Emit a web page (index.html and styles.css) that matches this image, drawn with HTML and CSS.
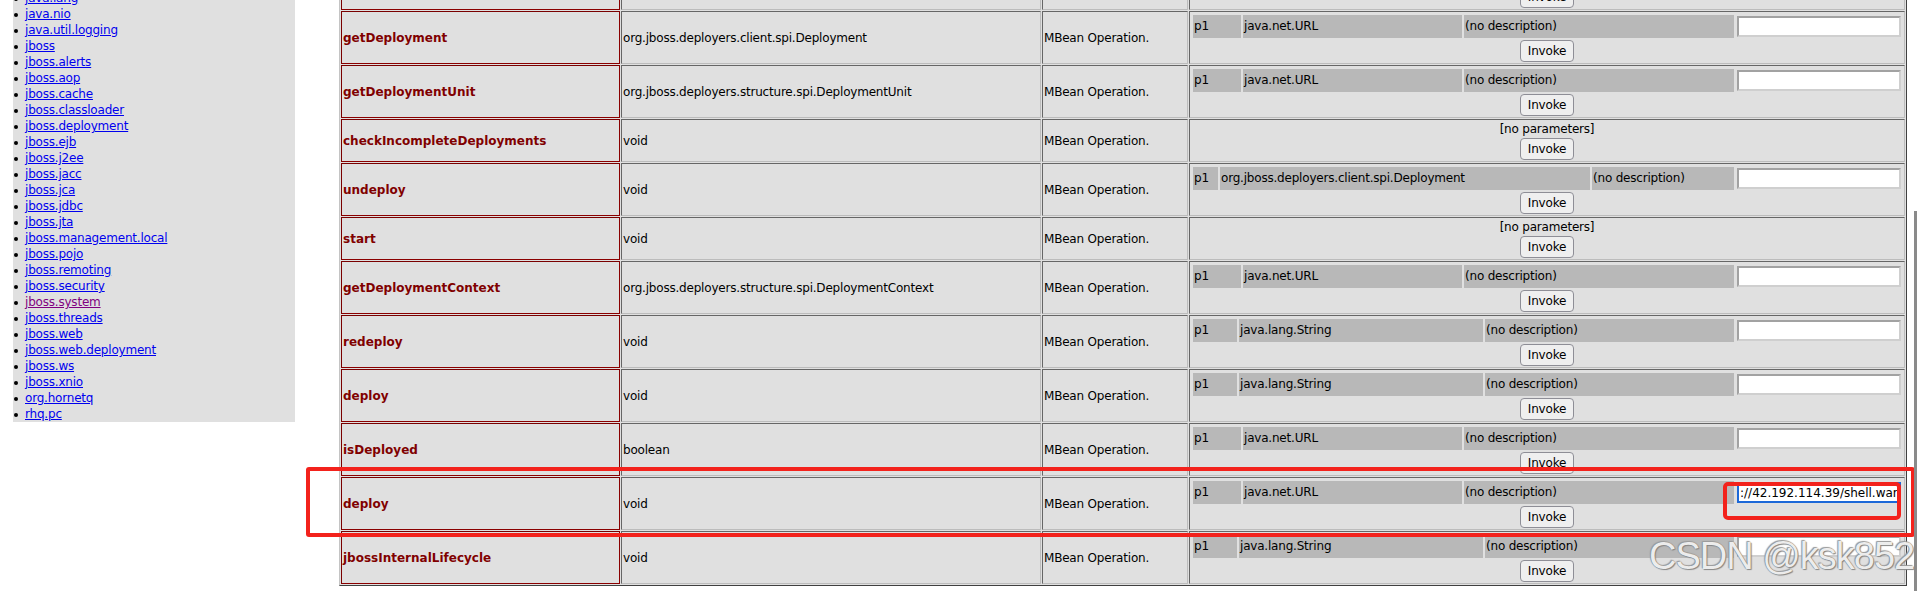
FILE: index.html
```html
<!DOCTYPE html>
<html>
<head>
<meta charset="utf-8">
<title>JMX Agent View</title>
<link rel="stylesheet" href="styles.css">
</head>
<body>
<div class="page">
  <div class="nav">
    <ul>
      <li><a href="#">java.lang</a></li>
      <li><a href="#">java.nio</a></li>
      <li><a href="#">java.util.logging</a></li>
      <li><a href="#">jboss</a></li>
      <li><a href="#">jboss.alerts</a></li>
      <li><a href="#">jboss.aop</a></li>
      <li><a href="#">jboss.cache</a></li>
      <li><a href="#">jboss.classloader</a></li>
      <li><a href="#">jboss.deployment</a></li>
      <li><a href="#">jboss.ejb</a></li>
      <li><a href="#">jboss.j2ee</a></li>
      <li><a href="#">jboss.jacc</a></li>
      <li><a href="#">jboss.jca</a></li>
      <li><a href="#">jboss.jdbc</a></li>
      <li><a href="#">jboss.jta</a></li>
      <li><a href="#">jboss.management.local</a></li>
      <li><a href="#">jboss.pojo</a></li>
      <li><a href="#">jboss.remoting</a></li>
      <li><a href="#">jboss.security</a></li>
      <li><a href="#" class="visited">jboss.system</a></li>
      <li><a href="#">jboss.threads</a></li>
      <li><a href="#">jboss.web</a></li>
      <li><a href="#">jboss.web.deployment</a></li>
      <li><a href="#">jboss.ws</a></li>
      <li><a href="#">jboss.xnio</a></li>
      <li><a href="#">org.hornetq</a></li>
      <li><a href="#">rhq.pc</a></li>
    </ul>
  </div>

  <table class="ops">
    <colgroup><col class="k-name"><col class="k-type"><col class="k-desc"><col class="k-par"></colgroup>
    <tbody>
      <tr>
        <td class="c name"></td>
        <td class="c"></td>
        <td class="c"></td>
        <td class="c par">
          <table class="args"><colgroup><col class="u1"><col class="u2"><col class="u3"><col></colgroup><tr><td></td><td></td><td></td><td class="ai"><input class="field" type="text"></td></tr></table>
          <button class="invoke">Invoke</button>
        </td>
      </tr>
      <tr>
        <td class="c name">getDeployment</td>
        <td class="c">org.jboss.deployers.client.spi.Deployment</td>
        <td class="c">MBean Operation.</td>
        <td class="c par">
          <table class="args"><colgroup><col class="u1"><col class="u2"><col class="u3"><col></colgroup><tr><td>p1</td><td>java.net.URL</td><td>(no description)</td><td class="ai"><input class="field" type="text"></td></tr></table>
          <button class="invoke">Invoke</button>
        </td>
      </tr>
      <tr>
        <td class="c name">getDeploymentUnit</td>
        <td class="c">org.jboss.deployers.structure.spi.DeploymentUnit</td>
        <td class="c">MBean Operation.</td>
        <td class="c par">
          <table class="args"><colgroup><col class="u1"><col class="u2"><col class="u3"><col></colgroup><tr><td>p1</td><td>java.net.URL</td><td>(no description)</td><td class="ai"><input class="field" type="text"></td></tr></table>
          <button class="invoke">Invoke</button>
        </td>
      </tr>
      <tr>
        <td class="c name">checkIncompleteDeployments</td>
        <td class="c">void</td>
        <td class="c">MBean Operation.</td>
        <td class="c par">
          <div class="none">[no parameters]</div>
          <button class="invoke">Invoke</button>
        </td>
      </tr>
      <tr>
        <td class="c name">undeploy</td>
        <td class="c">void</td>
        <td class="c">MBean Operation.</td>
        <td class="c par">
          <table class="args"><colgroup><col class="d1"><col class="d2"><col class="d3"><col></colgroup><tr><td>p1</td><td>org.jboss.deployers.client.spi.Deployment</td><td>(no description)</td><td class="ai"><input class="field" type="text"></td></tr></table>
          <button class="invoke">Invoke</button>
        </td>
      </tr>
      <tr>
        <td class="c name">start</td>
        <td class="c">void</td>
        <td class="c">MBean Operation.</td>
        <td class="c par">
          <div class="none">[no parameters]</div>
          <button class="invoke">Invoke</button>
        </td>
      </tr>
      <tr>
        <td class="c name">getDeploymentContext</td>
        <td class="c">org.jboss.deployers.structure.spi.DeploymentContext</td>
        <td class="c">MBean Operation.</td>
        <td class="c par">
          <table class="args"><colgroup><col class="u1"><col class="u2"><col class="u3"><col></colgroup><tr><td>p1</td><td>java.net.URL</td><td>(no description)</td><td class="ai"><input class="field" type="text"></td></tr></table>
          <button class="invoke">Invoke</button>
        </td>
      </tr>
      <tr>
        <td class="c name">redeploy</td>
        <td class="c">void</td>
        <td class="c">MBean Operation.</td>
        <td class="c par">
          <table class="args"><colgroup><col class="s1"><col class="s2"><col class="s3"><col></colgroup><tr><td>p1</td><td>java.lang.String</td><td>(no description)</td><td class="ai"><input class="field" type="text"></td></tr></table>
          <button class="invoke">Invoke</button>
        </td>
      </tr>
      <tr>
        <td class="c name">deploy</td>
        <td class="c">void</td>
        <td class="c">MBean Operation.</td>
        <td class="c par">
          <table class="args"><colgroup><col class="s1"><col class="s2"><col class="s3"><col></colgroup><tr><td>p1</td><td>java.lang.String</td><td>(no description)</td><td class="ai"><input class="field" type="text"></td></tr></table>
          <button class="invoke">Invoke</button>
        </td>
      </tr>
      <tr>
        <td class="c name">isDeployed</td>
        <td class="c">boolean</td>
        <td class="c">MBean Operation.</td>
        <td class="c par">
          <table class="args"><colgroup><col class="u1"><col class="u2"><col class="u3"><col></colgroup><tr><td>p1</td><td>java.net.URL</td><td>(no description)</td><td class="ai"><input class="field" type="text"></td></tr></table>
          <button class="invoke">Invoke</button>
        </td>
      </tr>
      <tr>
        <td class="c name">deploy</td>
        <td class="c">void</td>
        <td class="c">MBean Operation.</td>
        <td class="c par">
          <table class="args"><colgroup><col class="u1"><col class="u2"><col class="u3"><col></colgroup><tr><td>p1</td><td>java.net.URL</td><td>(no description)</td><td class="ai"><input class="field focused" type="text" value="://42.192.114.39/shell.war"></td></tr></table>
          <button class="invoke">Invoke</button>
        </td>
      </tr>
      <tr>
        <td class="c name">jbossInternalLifecycle</td>
        <td class="c">void</td>
        <td class="c">MBean Operation.</td>
        <td class="c par">
          <table class="args"><colgroup><col class="s1"><col class="s2"><col class="s3"><col></colgroup><tr><td>p1</td><td>java.lang.String</td><td>(no description)</td><td class="ai"><input class="field" type="text"></td></tr></table>
          <button class="invoke">Invoke</button>
        </td>
      </tr>
    </tbody>
  </table>
</div>

<div class="mark mark-big"></div>
<div class="mark mark-small"></div>
<div class="watermark">CSDN @ksk852</div>
<div class="scrollline"></div>
</body>
</html>
```

FILE: styles.css
```css
html, body {
  margin: 0;
  padding: 0;
  background: #ffffff;
  overflow: hidden;
}

body {
  font-family: "DejaVu Sans", "Noto Sans", sans-serif;
  font-size: 12px;
  color: #000;
  position: relative;
  width: 1920px;
  height: 591px;
}

.page {
  display: flex;
  align-items: flex-start;
}

/* left navigation */
.nav {
  flex: none;
  width: 282px;
  margin: -11px 0 0 13px;
  padding-top: 1px;
  background: #e0e0e0;
}

.nav ul {
  list-style: none;
  margin: 0;
  padding: 0;
}

.nav li {
  display: flex;
  align-items: center;
  height: 16px;
  line-height: 16px;
  letter-spacing: -0.2px;
  white-space: nowrap;
}

.nav li::before {
  content: "";
  flex: none;
  width: 4px;
  height: 4px;
  border-radius: 50%;
  background: #000;
  margin: 1px 7px 0 1px;
}

.nav a {
  color: #0000ee;
  text-decoration: underline;
}

.nav a.visited {
  color: #800080;
}

/* operations table */
.ops {
  flex: none;
  margin: -45px 0 0 44px;
  width: 1568px;
  table-layout: fixed;
  border-collapse: separate;
  border-spacing: 1px;
  border: 1px solid;
  border-color: #c4c4c4 #404040 #404040 #c4c4c4;
  background: #e0e0e0;
}

.k-name { width: 279px; }
.k-type { width: 420px; }
.k-desc { width: 146px; }
.k-par  { width: 716px; }

.ops td.c {
  box-sizing: border-box;
  border: 1px solid;
  border-color: #666666 #bcbcbc #bcbcbc #666666;
  padding: 1px;
  background: #e0e0e0;
  vertical-align: middle;
  letter-spacing: -0.2px;
  line-height: 16px;
  white-space: nowrap;
  overflow: hidden;
}

.ops td.name {
  border-color: #7a0000 #8a0000 #8a0000 #7a0000;
  color: #800000;
  font-weight: bold;
  letter-spacing: 0;
}

.ops td.par {
  vertical-align: top;
}

/* parameter rows */
.args {
  width: 100%;
  table-layout: fixed;
  border-collapse: separate;
  border-spacing: 2px;
}

.u1 { width: 48px; }
.u2 { width: 219px; }
.u3 { width: 270px; }

.d1 { width: 25px; }
.d2 { width: 370px; }
.d3 { width: 142px; }

.s1 { width: 44px; }
.s2 { width: 244px; }
.s3 { width: 249px; }

.args td {
  background: #b8b8b8;
  padding: 1px;
  height: 21px;
  line-height: 21px;
  vertical-align: middle;
  white-space: nowrap;
  overflow: hidden;
}

.args td.ai {
  background: transparent;
}

.field {
  display: block;
  box-sizing: border-box;
  width: 164px;
  height: 21px;
  margin: 0;
  padding: 0 2px;
  border: 2px solid;
  border-color: #a2a2a2 #cfcfcf #cfcfcf #a2a2a2;
  background: #ffffff;
  font-family: "DejaVu Sans", sans-serif;
  font-size: 12px;
  color: #000;
  outline: none;
}

.field.focused {
  border-color: #1c68d8;
  padding-left: 1px;
}

.none {
  text-align: center;
  line-height: 17px;
}

.invoke {
  display: block;
  margin: 0 auto;
  height: 22px;
  padding: 0 7px;
  box-sizing: border-box;
  font-family: "DejaVu Sans", sans-serif;
  font-size: 12px;
  letter-spacing: -0.2px;
  color: #000;
  background: #efefef;
  border: 1px solid #8e8e96;
  border-radius: 4px;
}

/* annotation overlays */
.mark {
  position: absolute;
  box-sizing: border-box;
  border: 4px solid #f3221c;
}

.mark-big {
  left: 306px;
  top: 467px;
  width: 1609px;
  height: 70px;
  border-radius: 3px;
}

.mark-small {
  left: 1723px;
  top: 482px;
  width: 178px;
  height: 38px;
  border-radius: 5px;
}

.watermark {
  position: absolute;
  left: 1649px;
  top: 537px;
  font-family: "Liberation Sans", Arial, sans-serif;
  font-size: 38px;
  line-height: 38px;
  letter-spacing: -1px;
  white-space: nowrap;
  color: rgba(255, 255, 255, 0.88);
  text-shadow: 0 0 1px #6a6a6a, 1px 1px 1px #8a8a8a, -1px -1px 1px #a0a0a0;
}

.scrollline {
  position: absolute;
  left: 1914px;
  top: 211px;
  width: 3px;
  height: 380px;
  background: #8a8a8a;
}
```
